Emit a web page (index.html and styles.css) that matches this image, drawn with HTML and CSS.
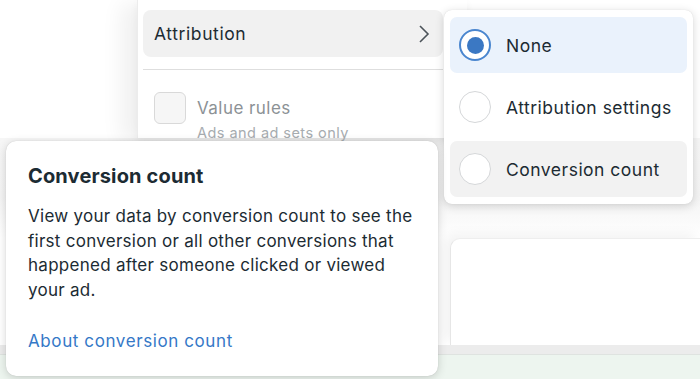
FILE: index.html
```html
<!DOCTYPE html>
<html>
<head>
<meta charset="utf-8">
<link rel="stylesheet" href="styles.css">
</head>
<body>
<div class="page">
  <div class="backdrop">
    <div class="top-row">
      <div class="menu">
        <div class="menu-item active">
          <span>Attribution</span>
          <svg class="chev" width="12" height="18" viewBox="0 0 12 18"><polyline points="2,1 10,9 2,17" fill="none" stroke="#4b5359" stroke-width="1.6"/></svg>
        </div>
        <div class="divider"></div>
        <div class="check-row">
          <div class="checkbox"></div>
          <div class="check-text">
            <div class="check-label">Value rules</div>
            <div class="check-sub">Ads and ad sets only</div>
          </div>
        </div>
      </div>
    </div>
    <div class="mid-row">
      <div class="lower-panel"></div>
    </div>
    <div class="bottom-band"></div>
    <div class="bottom-strip"></div>
  </div>

  <div class="submenu">
    <div class="opt selected">
      <span class="radio on"><span class="dot"></span></span>
      <span>None</span>
    </div>
    <div class="opt">
      <span class="radio"></span>
      <span>Attribution settings</span>
    </div>
    <div class="opt hover">
      <span class="radio"></span>
      <span>Conversion count</span>
    </div>
  </div>

  <div class="tooltip">
    <div class="tt-title">Conversion count</div>
    <p class="tt-body">View your data by conversion count to see the first conversion or all other conversions that happened after someone clicked or viewed your ad.</p>
    <a class="tt-link">About conversion count</a>
  </div>
</div>
</body>
</html>
```

FILE: styles.css
```css
* { box-sizing: border-box; }
html, body { margin: 0; padding: 0; }
body {
  width: 700px;
  height: 379px;
  overflow: hidden;
  background: #ffffff;
  font-family: Inter, "Noto Sans", Roboto, sans-serif;
  color: #1c2b33;
}
.page {
  position: relative;
  width: 700px;
  height: 379px;
}
.backdrop {
  display: flex;
  flex-direction: column;
  height: 379px;
}
.top-row {
  height: 138px;
  display: flex;
  padding-left: 137px;
  position: relative;
  z-index: 1;
}
.menu {
  width: 330px;
  height: 138px;
  background: #fff;
  border-left: 1px solid #ececec;
  box-shadow: -16px 4px 20px rgba(0,0,0,0.06), 0 4px 8px rgba(0,0,0,0.05);
  padding: 10px 0 0 5px;
}
.menu-item {
  height: 47px;
  width: 300px;
  border-radius: 8px;
  background: #f1f1f1;
  display: flex;
  align-items: center;
  justify-content: space-between;
  padding: 0 13px 0 11px;
  font-size: 17.5px;
  letter-spacing: 0.6px;
}
.chev { display: block; }
.divider {
  height: 1px;
  width: 300px;
  background: #dedede;
  margin-top: 12px;
}
.check-row {
  display: flex;
  gap: 11px;
  padding: 22px 0 0 11px;
}
.checkbox {
  width: 32px;
  height: 32px;
  border: 1px solid #d9d9d9;
  border-radius: 6px;
  background: #f6f6f6;
}
.check-text { padding-top: 4px; }
.check-label {
  font-size: 17px;
  line-height: 24px;
  color: #8c9296;
  letter-spacing: 0.45px;
}
.check-sub {
  font-size: 14.5px;
  line-height: 20px;
  color: #a7acb0;
  margin-top: 3px;
  letter-spacing: 0.45px;
}
.mid-row {
  flex: 1;
  display: flex;
  padding: 100px 0 0 450px;
  background: linear-gradient(#f6f6f6, #f4f4f4 60px, #fff 100px);
}
.lower-panel {
  flex: 1;
  background: #fff;
  border-left: 1px solid #e6e6e6;
  border-top: 1px solid #eeeeee;
  border-top-left-radius: 10px;
  box-shadow: -6px -4px 12px rgba(0,0,0,0.05);
}
.bottom-band {
  height: 10px;
  background: #ececec;
  border-bottom: 1px solid #dfe3e0;
}
.bottom-strip {
  height: 24px;
  background: #edf5ef;
}

.submenu {
  position: absolute;
  left: 444px;
  top: 10px;
  width: 249px;
  height: 194px;
  background: #fff;
  border-radius: 8px;
  box-shadow: 0 2px 10px rgba(0,0,0,0.16), 0 0 1px rgba(0,0,0,0.15);
  padding: 7px 6px;
  display: flex;
  flex-direction: column;
  gap: 6px;
  z-index: 3;
}
.opt {
  height: 56px;
  border-radius: 7px;
  display: flex;
  align-items: center;
  gap: 15px;
  padding-left: 9px;
  font-size: 17.5px;
  letter-spacing: 0.5px;
}
.opt.selected { background: #eaf2fc; }
.opt.hover { background: #f2f2f2; }
.radio {
  width: 32px;
  height: 32px;
  border-radius: 50%;
  border: 1px solid #d5d7d9;
  background: #fff;
  display: flex;
  align-items: center;
  justify-content: center;
  flex: none;
}
.radio.on {
  border: 2px solid #4a86cf;
  box-shadow: inset 0 0 0 2px #fff;
}
.dot {
  width: 17px;
  height: 17px;
  border-radius: 50%;
  background: #3b78c3;
}

.tooltip {
  position: absolute;
  left: 6px;
  top: 141px;
  width: 432px;
  height: 235px;
  background: #fff;
  border-radius: 10px;
  box-shadow: 0 2px 10px rgba(0,0,0,0.16), 0 0 1px rgba(0,0,0,0.2);
  padding: 23px 22px 0 22px;
  z-index: 4;
}
.tt-title {
  font-size: 20px;
  line-height: 24px;
  font-weight: 700;
  letter-spacing: 0.15px;
}
.tt-body {
  margin: 16px 0 0 0;
  font-size: 17px;
  line-height: 24.7px;
  letter-spacing: 0.27px;
}
.tt-link {
  display: block;
  margin-top: 26px;
  font-size: 17px;
  line-height: 24px;
  color: #3578c7;
  letter-spacing: 0.6px;
}
```
